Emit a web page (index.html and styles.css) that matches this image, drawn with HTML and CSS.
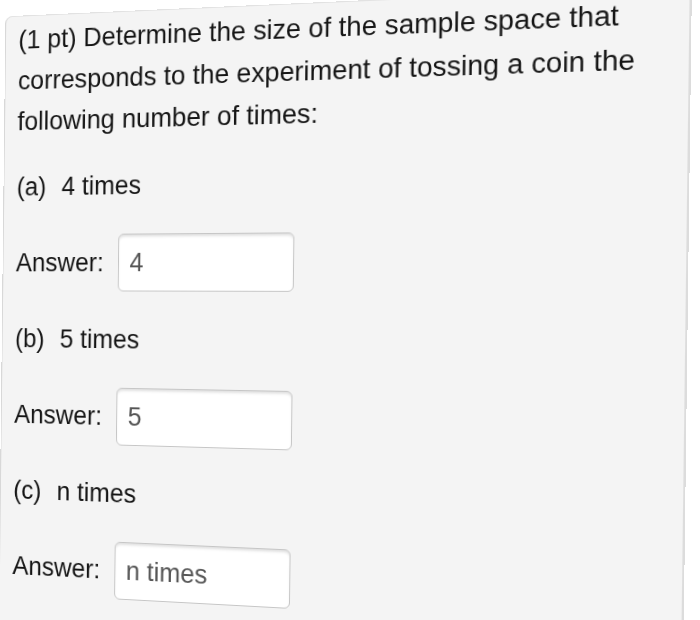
FILE: index.html
```html
<!DOCTYPE html>
<html>
<head>
<meta charset="utf-8">
<link rel="stylesheet" href="styles.css">
</head>
<body>
<div class="sheet">
  <p class="question">(1 pt) Determine the size of the sample space that corresponds to the experiment of tossing a coin the following number of times:</p>
  <div class="items">
    <div class="part"><span class="label">(a)</span><span>4 times</span></div>
    <div class="answer"><span>Answer:</span><div class="box">4</div></div>
    <div class="part"><span class="label">(b)</span><span>5 times</span></div>
    <div class="answer"><span>Answer:</span><div class="box">5</div></div>
    <div class="part"><span class="label">(c)</span><span>n times</span></div>
    <div class="answer"><span>Answer:</span><div class="box">n times</div></div>
  </div>
</div>
</body>
</html>
```
FILE: styles.css
```css
html, body {
  margin: 0;
  padding: 0;
  background: #ffffff;
}
body {
  width: 700px;
  height: 620px;
  overflow: hidden;
  font-family: "Liberation Sans", Arial, sans-serif;
  color: #151515;
}
.sheet {
  margin-left: -21px;
  margin-top: 1px;
  width: 694px;
  height: 680px;
  overflow: hidden;
  background: #f4f4f4;
  border-left: 1px solid #d8d8d8;
  border-right: 2px solid #dcdcdc;
  border-top: 1px solid #e2e2e2;
  border-radius: 8px 0 0 0;
  padding: 3px 0 0 14px;
  box-sizing: border-box;
  transform-origin: 368px 276px;
  transform: perspective(800px) rotateY(-7.4deg) skewX(-0.7deg);
}
.question {
  margin: 0;
  font-size: 27.7px;
  line-height: 43px;
  width: 660px;
}
.items {
  margin-top: 33px;
  display: flex;
  flex-direction: column;
  gap: 35px;
}
.part {
  display: flex;
  gap: 17px;
  font-size: 27px;
  line-height: 30px;
}
.answer {
  display: flex;
  align-items: center;
  gap: 15px;
  font-size: 27px;
}
.box {
  width: 186px;
  height: 60px;
  box-sizing: border-box;
  background: #ffffff;
  border: 1px solid #c6c6c6;
  border-radius: 6px;
  box-shadow: inset 0 3px 3px -1px rgba(0,0,0,0.13);
  padding: 0 12px;
  display: flex;
  align-items: center;
  color: #555555;
  font-size: 27px;
}
```
